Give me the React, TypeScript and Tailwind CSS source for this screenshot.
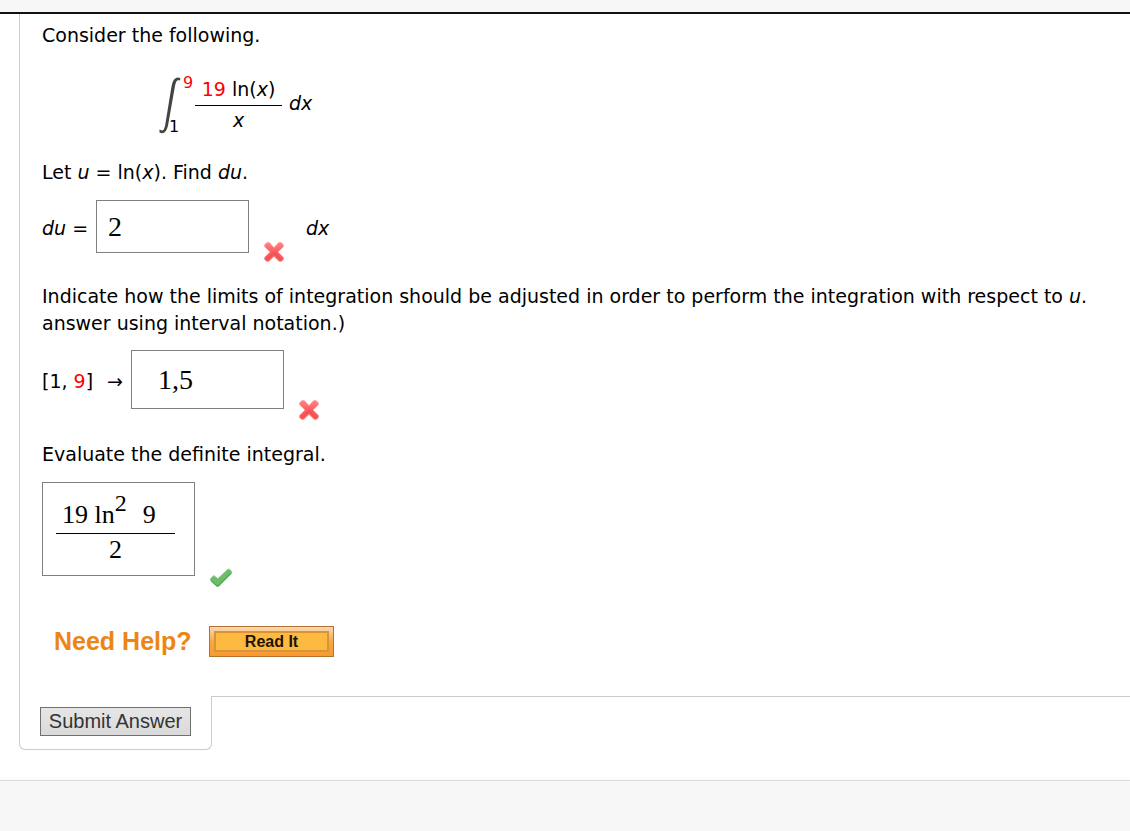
const WrongMark = () => (
  <svg role="img" aria-label="Incorrect" viewBox="0 0 22 22" className="h-[22px] w-[22px] shrink-0">
    <defs>
      <linearGradient id="wrong" x1="0" y1="0" x2="0" y2="1">
        <stop offset="0" stopColor="#ff8484" />
        <stop offset="0.5" stopColor="#fb5c5e" />
        <stop offset="1" stopColor="#f4595b" />
      </linearGradient>
    </defs>
    <path
      d="M4 1.4 L6.2 1.4 L11 6.6 L15.8 1.4 L18 1.4 L20.4 3.8 L20.4 5.8 L15 11 L20.6 16.4 L20.6 18.4 L18.4 20.6 L16.2 20.6 L11 15.4 L5.8 20.6 L3.6 20.6 L1.4 18.4 L1.4 16.4 L7 11 L1.6 5.8 L1.6 3.8 Z"
      fill="url(#wrong)"
      stroke="#ffa3a3"
      strokeWidth="0.8"
      strokeLinejoin="round"
    />
    <path d="M4 18.6 L11 12 L18 18.6" fill="none" stroke="#ee3f45" strokeWidth="1.4" strokeOpacity="0.45" />
  </svg>
)

const CorrectMark = () => (
  <svg role="img" aria-label="Correct" viewBox="0 0 24 20" className="h-5 w-6 shrink-0">
    <path
      d="M1.2 10.8 L4.8 7.4 L8.8 10.6 L18.8 1.2 L20.6 1.2 L22.8 3.6 L22.6 5.4 L10 18.4 L7.6 18.4 L1.4 12.6 Z"
      fill="#6cbd69"
      stroke="#93cf91"
      strokeWidth="0.8"
      strokeLinejoin="round"
    />
    <path d="M2.2 13 L8.6 18.2 L22.2 5.2" fill="none" stroke="#4a9a4c" strokeWidth="1" />
  </svg>
)

const Integral = () => (
  <div className="flex h-[60px] items-center pl-[117px]">
    <svg viewBox="0 0 22 58" className="h-[58px] w-[22px] shrink-0" aria-hidden="true">
      <path
        d="M0.5 53.5 L3 54.4 C4.6 55 5.6 52 6.2 49 L12.4 11 C13.8 3.4 16.4 0 21.4 2 L21 4.6 C18 3.2 17 5 16 10 L9.2 48.6 C7.8 56.2 4.6 58.6 0.5 56.6 Z"
        fill="#444"
      />
    </svg>
    <div className="-ml-3 flex h-[60px] w-[26px] flex-col justify-between text-[16px] leading-4">
      <span className="pl-[14px] text-[#ff0000]">9</span>
      <span>1</span>
    </div>
    <div className="flex w-[87px] flex-col items-center">
      <div className="w-full border-b border-black pb-1 text-center leading-6">
        <span className="text-[#ff0000]">19</span> ln(<i>x</i>)
      </div>
      <i className="leading-7">x</i>
    </div>
    <i className="pb-1 pl-[7px]">dx</i>
  </div>
)

const Question = () => (
  <section className="border-l border-[#ccc] pt-2 pb-[39px] pl-[22px]">
    <p>Consider the following.</p>
    <div className="mt-[26px] mb-6">
      <Integral />
    </div>
    <p>
      Let <i>u</i> = ln(<i>x</i>). Find <i>du</i>.
    </p>

    <div className="mt-[14px] flex items-center">
      <label htmlFor="du" className="w-[54px] pt-1">
        <i>du</i> =
      </label>
      <input
        id="du"
        defaultValue="2"
        className="h-[53px] w-[153px] border border-[#808080] px-[11px] font-['Liberation_Serif',serif] text-[28px] outline-none"
      />
      <div className="-mb-[10px] ml-[14px] h-[22px] self-end">
        <WrongMark />
      </div>
      <i className="ml-[21px] pt-1">dx</i>
    </div>

    <p className="mt-[30px]">
      Indicate how the limits of integration should be adjusted in order to perform the integration with respect to{' '}
      <i>u</i>.<br />
      answer using interval notation.)
    </p>

    <div className="mt-[13px] flex items-center">
      <label htmlFor="limits" className="flex w-[89px] justify-between pt-1 pr-2 whitespace-nowrap">
        <span>
          [1, <span className="text-[#ff0000]">9</span>]
        </span>
        <span>→</span>
      </label>
      <input
        id="limits"
        defaultValue="1,5"
        className="h-[59px] w-[153px] border border-[#808080] px-[26px] font-['Liberation_Serif',serif] text-[28px] outline-none"
      />
      <div className="-mb-3 ml-[14px] h-[22px] self-end">
        <WrongMark />
      </div>
    </div>

    <p className="mt-8" id="evaluate">
      Evaluate the definite integral.
    </p>

    <div className="mt-[14px] flex items-end">
      <div
        role="textbox"
        tabIndex={0}
        aria-labelledby="evaluate"
        className="h-[94px] w-[153px] border border-[#808080] px-[13px] pt-2 font-['Liberation_Serif',serif] text-[26px]"
      >
        <div className="flex w-[119px] border-b border-black pt-2 pb-[2px] pl-[6px] leading-8">
          <span>19 ln</span>
          <sup className="top-0 -mt-3 text-[24px] leading-8">2</sup>
          <span className="pl-4">9</span>
        </div>
        <div className="w-[119px] text-center leading-8">2</div>
      </div>
      <div className="-mb-3 ml-[14px] h-5">
        <CorrectMark />
      </div>
    </div>

    <div className="mt-[50px] flex items-center pl-3 font-['Liberation_Sans',Arial,sans-serif]">
      <b className="w-[155px] text-[25px] leading-[31px] text-[#ee8512]">Need Help?</b>
      <button className="h-[31px] w-[125px] border border-[#b07335] bg-linear-to-b from-[#fbd9b0] via-[#f9a544] to-[#f99a2e] p-1">
        <span className="flex h-full items-center justify-center border-2 border-[#d6943c] bg-[#fdb940] text-[16px] font-bold text-[#1c1405]">
          Read It
        </span>
      </button>
    </div>
  </section>
)

export default function App() {
  return (
    <div className="flex min-h-screen flex-col bg-white font-['DejaVu_Sans',Verdana,sans-serif] text-[19px] leading-[27px] text-black">
      <header className="h-[14px] border-b-2 border-[#111] bg-[#f7f7f7]" />
      <main className="pb-[30px] pl-[19px]">
        <Question />
        <div className="flex">
          <div className="w-[193px] rounded-b-md border border-t-0 border-[#ccc] pt-[11px] pb-[13px] pl-5">
            <button className="block h-[29px] w-[151px] border border-[#707070] bg-linear-to-b from-[#e6e6e6] to-[#dadada] font-['Liberation_Sans',Arial,sans-serif] text-[20px] leading-[27px] text-[#333]">
              Submit Answer
            </button>
          </div>
          <div className="flex-1 border-t border-[#ccc]" />
        </div>
      </main>
      <footer className="flex-1 border-t border-[#ddd] bg-[#f7f7f7] shadow-[0_-2px_4px_rgba(0,0,0,0.03)]" />
    </div>
  )
}
